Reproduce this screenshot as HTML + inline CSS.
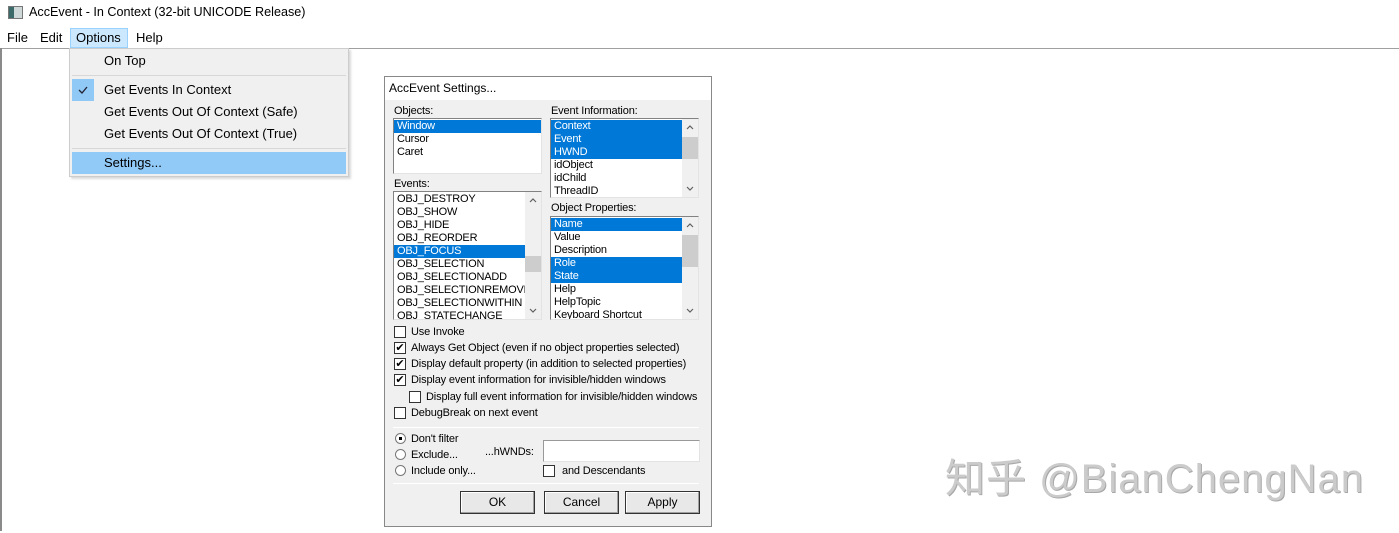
<!DOCTYPE html>
<html><head><meta charset="utf-8"><style>
*{margin:0;padding:0;box-sizing:border-box}
body{width:1399px;height:533px;background:#fff;position:relative;overflow:hidden;font-family:"Liberation Sans",sans-serif;color:#000}
.a{position:absolute}
.t{font-size:13px;white-space:nowrap}
.s{font-size:11px;white-space:nowrap;letter-spacing:-0.15px}
.lb{position:absolute;background:#fff;border:1px solid #828282;border-right-color:#e3e3e3;border-bottom-color:#e3e3e3;overflow:hidden;padding-top:1px}
.lb div{height:13px;line-height:13px;padding-left:3px;font-size:11px;white-space:nowrap;letter-spacing:-0.2px}
.sel{background:#0078d7;color:#fff}
.lb .sb{position:absolute;right:0;top:0;width:16px;bottom:0;height:auto;padding:0;background:#f0f0f0}
.sb i{position:absolute;left:0;width:16px;background:#cdcdcd}
.sb svg{position:absolute;left:4px}
.cb{position:absolute;width:12px;height:12px;border:1px solid #333;background:#fff;font-size:11px;line-height:10px;text-align:center}
.rb{position:absolute;width:11px;height:11px;border-radius:50%;border:1px solid #777;background:#fff}
.btn{position:absolute;height:23px;border:1px solid #333;background:#e8e8e8;font-size:12px;line-height:21px;text-align:center;box-shadow:inset -1px -1px #a0a0a0,inset 1px 1px #fff}
</style></head><body>
<div class="a" style="left:8px;top:6px;width:15px;height:13px;border:1px solid #777;background:#cfd8d8"><div style="width:5px;height:11px;background:#3d6a6a"></div></div>
<div class="a t" style="left:29px;top:5px;font-size:12.6px">AccEvent - In Context (32-bit UNICODE Release)</div>
<div class="a t" style="left:7px;top:30px">File</div>
<div class="a t" style="left:40px;top:30px">Edit</div>
<div class="a" style="left:70px;top:28px;width:58px;height:20px;background:#cce8ff;border:1px solid #99d1ff"></div>
<div class="a t" style="left:76px;top:30px">Options</div>
<div class="a t" style="left:136px;top:30px">Help</div>
<div class="a" style="left:0;top:48px;width:1399px;height:1px;background:#a0a0a0"></div>
<div class="a" style="left:0;top:48px;width:2px;height:483px;background:#8a8a8a"></div>

<div class="a" style="left:69px;top:48px;width:280px;height:129px;background:#f0f0f0;border:1px solid #ccc;box-shadow:2px 2px 2px rgba(0,0,0,.15)"></div>
<div class="a t" style="left:104px;top:53px">On Top</div>
<div class="a" style="left:72px;top:75px;width:274px;height:1px;background:#d7d7d7"></div>
<div class="a" style="left:72px;top:79px;width:22px;height:22px;background:#90c8f6"></div>
<svg class="a" style="left:77px;top:84px" width="12" height="12"><path d="M2 6 L5 9 L10 3" fill="none" stroke="#223" stroke-width="1.3"/></svg>
<div class="a t" style="left:104px;top:82px">Get Events In Context</div>
<div class="a t" style="left:104px;top:104px">Get Events Out Of Context (Safe)</div>
<div class="a t" style="left:104px;top:126px">Get Events Out Of Context (True)</div>
<div class="a" style="left:72px;top:148px;width:274px;height:1px;background:#d7d7d7"></div>
<div class="a" style="left:72px;top:152px;width:274px;height:22px;background:#91c9f7"></div>
<div class="a t" style="left:104px;top:155px">Settings...</div>

<div class="a" style="left:384px;top:76px;width:328px;height:451px;background:#f0f0f0;border:1px solid #888"></div>
<div class="a" style="left:385px;top:77px;width:326px;height:23px;background:#fff"></div>
<div class="a t" style="left:389px;top:81px;font-size:12px">AccEvent Settings...</div>

<div class="a s" style="left:394px;top:105px">Objects:</div>
<div class="lb" style="left:393px;top:118px;width:149px;height:56px"><div class="sel">Window</div><div>Cursor</div><div>Caret</div></div>
<div class="a s" style="left:551px;top:105px">Event Information:</div>
<div class="lb" style="left:550px;top:118px;width:149px;height:80px"><div class="sel" style="margin-right:16px">Context</div><div class="sel" style="margin-right:16px">Event</div><div class="sel" style="margin-right:16px">HWND</div><div>idObject</div><div>idChild</div><div>ThreadID</div>
<div class="sb"><svg style="top:5px" width="8" height="6"><path d="M1 5 L4 2 L7 5" fill="none" stroke="#606060" stroke-width="1.2"/></svg><i style="top:18px;height:22px"></i><svg style="bottom:5px" width="8" height="6"><path d="M1 1 L4 4 L7 1" fill="none" stroke="#606060" stroke-width="1.2"/></svg></div></div>
<div class="a s" style="left:394px;top:178px">Events:</div>
<div class="lb" style="left:393px;top:191px;width:149px;height:129px"><div>OBJ_DESTROY</div><div>OBJ_SHOW</div><div>OBJ_HIDE</div><div>OBJ_REORDER</div><div class="sel" style="margin-right:16px">OBJ_FOCUS</div><div>OBJ_SELECTION</div><div>OBJ_SELECTIONADD</div><div style="width:132px;overflow:hidden">OBJ_SELECTIONREMOVE</div><div>OBJ_SELECTIONWITHIN</div><div>OBJ_STATECHANGE</div>
<div class="sb"><svg style="top:5px" width="8" height="6"><path d="M1 5 L4 2 L7 5" fill="none" stroke="#606060" stroke-width="1.2"/></svg><i style="top:64px;height:16px"></i><svg style="bottom:5px" width="8" height="6"><path d="M1 1 L4 4 L7 1" fill="none" stroke="#606060" stroke-width="1.2"/></svg></div></div>
<div class="a s" style="left:551px;top:202px">Object Properties:</div>
<div class="lb" style="left:550px;top:216px;width:149px;height:104px"><div class="sel" style="margin-right:16px">Name</div><div>Value</div><div>Description</div><div class="sel" style="margin-right:16px">Role</div><div class="sel" style="margin-right:16px">State</div><div>Help</div><div>HelpTopic</div><div>Keyboard Shortcut</div>
<div class="sb"><svg style="top:5px" width="8" height="6"><path d="M1 5 L4 2 L7 5" fill="none" stroke="#606060" stroke-width="1.2"/></svg><i style="top:18px;height:32px"></i><svg style="bottom:5px" width="8" height="6"><path d="M1 1 L4 4 L7 1" fill="none" stroke="#606060" stroke-width="1.2"/></svg></div></div>

<div class="cb" style="left:394px;top:326px"></div><div class="a s" style="left:411px;top:326px">Use Invoke</div>
<div class="cb" style="left:394px;top:342px">✔</div><div class="a s" style="left:411px;top:342px">Always Get Object (even if no object properties selected)</div>
<div class="cb" style="left:394px;top:358px">✔</div><div class="a s" style="left:411px;top:358px">Display default property (in addition to selected properties)</div>
<div class="cb" style="left:394px;top:374px">✔</div><div class="a s" style="left:411px;top:374px">Display event information for invisible/hidden windows</div>
<div class="cb" style="left:409px;top:391px"></div><div class="a s" style="left:426px;top:391px">Display full event information for invisible/hidden windows</div>
<div class="cb" style="left:394px;top:407px"></div><div class="a s" style="left:411px;top:407px">DebugBreak on next event</div>
<div class="a" style="left:393px;top:427px;width:306px;height:1px;background:#a0a0a0;border-bottom:1px solid #fff"></div>
<div class="rb" style="left:395px;top:433px"><div style="width:3px;height:3px;background:#000;margin:3px"></div></div><div class="a s" style="left:411px;top:433px">Don't filter</div>
<div class="rb" style="left:395px;top:449px"></div><div class="a s" style="left:411px;top:449px">Exclude...</div>
<div class="rb" style="left:395px;top:465px"></div><div class="a s" style="left:411px;top:465px">Include only...</div>
<div class="a s" style="left:485px;top:446px">...hWNDs:</div>
<div class="a" style="left:543px;top:440px;width:157px;height:22px;background:#fff;border:1px solid #999;border-right-color:#e3e3e3;border-bottom-color:#e3e3e3"></div>
<div class="cb" style="left:543px;top:465px"></div><div class="a s" style="left:562px;top:465px">and Descendants</div>
<div class="a" style="left:393px;top:483px;width:306px;height:1px;background:#a0a0a0;border-bottom:1px solid #fff"></div>
<div class="btn" style="left:460px;top:491px;width:75px">OK</div>
<div class="btn" style="left:544px;top:491px;width:75px">Cancel</div>
<div class="btn" style="left:625px;top:491px;width:75px">Apply</div>

<div class="a" style="left:945px;top:446px;font-size:40px;letter-spacing:1px;color:#cbcbcb;font-family:'Liberation Sans','Noto Sans CJK SC',sans-serif;white-space:nowrap;text-shadow:1px 1px 0 #a8a8a8">知乎 @BianChengNan</div>
</body></html>
